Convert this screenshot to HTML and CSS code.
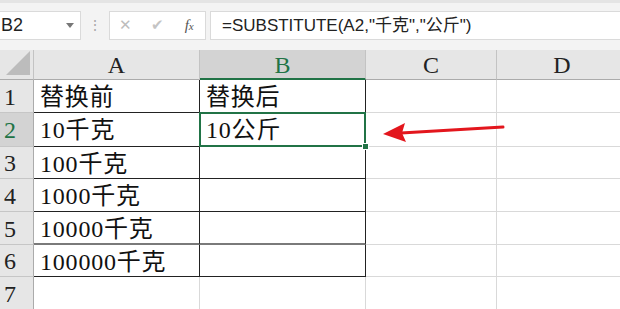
FILE: index.html
```html
<!DOCTYPE html>
<html>
<head>
<meta charset="utf-8">
<link rel="stylesheet" href="styles.css">
</head>
<body>

<div class="bar">
	<div class="namebox"><span>B2</span><i class="drop"></i></div>
	<div class="grip">&#8942;</div>
	<div class="fxbox">
		<span class="btn x">&#x2715;</span>
		<span class="btn ok">&#x2714;</span>
		<span class="btn fx"><i>f</i><small>x</small></span>
	</div>
	<div class="formula">=SUBSTITUTE(A2,"千克","公斤")</div>
</div>

<div class="sheet">
	<div class="corner"></div>
	<div class="hd col">A</div>
	<div class="hd col sel">B</div>
	<div class="hd col">C</div>
	<div class="hd col">D</div>

	<div class="hd row">1</div>
	<div class="c t">替换前</div>
	<div class="c t">替换后</div>
	<div class="c"></div>
	<div class="c"></div>

	<div class="hd row sel">2</div>
	<div class="c t">10千克</div>
	<div class="c t active">10公斤</div>
	<div class="c"></div>
	<div class="c"></div>

	<div class="hd row">3</div>
	<div class="c t">100千克</div>
	<div class="c t"></div>
	<div class="c"></div>
	<div class="c"></div>

	<div class="hd row">4</div>
	<div class="c t">1000千克</div>
	<div class="c t"></div>
	<div class="c"></div>
	<div class="c"></div>

	<div class="hd row">5</div>
	<div class="c t brk">10000千克</div>
	<div class="c t brk"></div>
	<div class="c"></div>
	<div class="c"></div>

	<div class="hd row">6</div>
	<div class="c t">100000千克</div>
	<div class="c t"></div>
	<div class="c"></div>
	<div class="c"></div>

	<div class="hd row">7</div>
	<div class="c"></div>
	<div class="c"></div>
	<div class="c"></div>
	<div class="c"></div>

	<!-- red pointer arrow -->
	<svg class="arrow" width="130" height="30" viewBox="0 0 130 30">
		<line x1="120" y1="10" x2="18" y2="16" stroke="#e3161d" stroke-width="3" stroke-linecap="round"/>
		<polygon points="0,17 22,6 19,16 23,25" fill="#e3161d"/>
	</svg>
</div>

</body>
</html>
```

FILE: styles.css
```css
html, body {
	margin: 0;
	padding: 0;
	background: #fff;
	overflow: hidden;
}

body {
	width: 620px;
	height: 309px;
	font-family: "Liberation Serif", "Noto Sans CJK SC", serif;
}

/* formula bar */
.bar {
	display: flex;
	align-items: center;
	height: 50px;
	padding-bottom: 3px;
	box-sizing: border-box;
	background: #f3f3f3;
	border-top: 3px solid #e4e4e4;
	font-family: "Liberation Sans", "Noto Sans CJK SC", sans-serif;
}

.namebox {
	display: flex;
	align-items: center;
	justify-content: space-between;
	flex: none;
	width: 85px;
	height: 29px;
	margin-left: -4px;
	padding: 0 6px 0 4px;
	box-sizing: border-box;
	background: #fff;
	border: 1px solid #dadada;
	font-size: 18px;
	color: #222;
}

.drop {
	border-left: 4px solid transparent;
	border-right: 4px solid transparent;
	border-top: 5px solid #777;
}

.grip {
	width: 28px;
	text-align: center;
	color: #a8a8a8;
	font-size: 14px;
}

.fxbox {
	display: flex;
	align-items: center;
	flex: none;
	width: 97px;
	height: 29px;
	box-sizing: border-box;
	background: #fff;
	border: 1px solid #dadada;
}

.btn {
	width: 32px;
	text-align: center;
	color: #bdbdbd;
	font-size: 15px;
}

.btn.ok { color: #c4c4c4; }

.btn.fx {
	color: #555;
	font-family: "Liberation Serif", serif;
	font-size: 15px;
}
.btn.fx small { font-size: 11px; font-style: italic; }

.formula {
	flex: 1;
	height: 29px;
	margin-left: 4px;
	margin-right: -4px;
	padding-left: 11px;
	box-sizing: border-box;
	background: #fff;
	border: 1px solid #dadada;
	font-size: 17px;
	line-height: 27px;
	color: #222;
	white-space: nowrap;
}

/* sheet grid */
.sheet {
	position: relative;
	display: grid;
	grid-template-columns: 34px 166px 166px 131px 131px;
	grid-template-rows: 30px 33px 34px 32px 33px 33px 32px 33px;
}

.sheet > div {
	box-sizing: border-box;
	border-right: 1px solid #d9d9d9;
	border-bottom: 1px solid #d9d9d9;
}

.hd {
	background: #e6e6e6;
	color: #222;
	font-size: 24px;
	display: flex;
	align-items: center;
	justify-content: center;
}

.sheet > .col {
	border-right-color: #c3c3c3;
	border-bottom-color: #ababab;
	padding-top: 2px;
}

.sheet > .row {
	border-right-color: #ababab;
	border-bottom-color: #c6c6c6;
	justify-content: flex-start;
	padding-left: 4px;
	padding-top: 2px;
}

.sheet > .hd.sel {
	background: #d3d3d3;
	color: #217346;
}

.sheet > .col.sel {
	border-bottom: 2px solid #217346;
}

.corner {
	position: relative;
	background: #e6e6e6;
}
.sheet > .corner {
	border-right-color: #c3c3c3;
	border-bottom-color: #ababab;
}
.corner::after {
	content: "";
	position: absolute;
	right: 3px;
	bottom: 4px;
	border-left: 24px solid transparent;
	border-bottom: 24px solid #bcbcbc;
}

.c {
	font-size: 24px;
	line-height: 34px;
	padding-left: 6px;
	letter-spacing: 0.8px;
	color: #111;
	white-space: nowrap;
}

.sheet > .t {
	border-right-color: #222;
	border-bottom-color: #222;
}

.sheet > .brk {
	border-bottom: 2px solid #7a7a7a;
}

.active {
	position: relative;
}
.active::after {
	content: "";
	position: absolute;
	left: -1px;
	top: -1px;
	right: -1px;
	bottom: -1px;
	border: 2px solid #217346;
}
.active::before {
	content: "";
	position: absolute;
	right: -4px;
	bottom: -4px;
	width: 5px;
	height: 5px;
	background: #217346;
	border: 1px solid #fff;
	z-index: 1;
}

.arrow {
	position: absolute;
	left: 383px;
	top: 67px;
}
```
